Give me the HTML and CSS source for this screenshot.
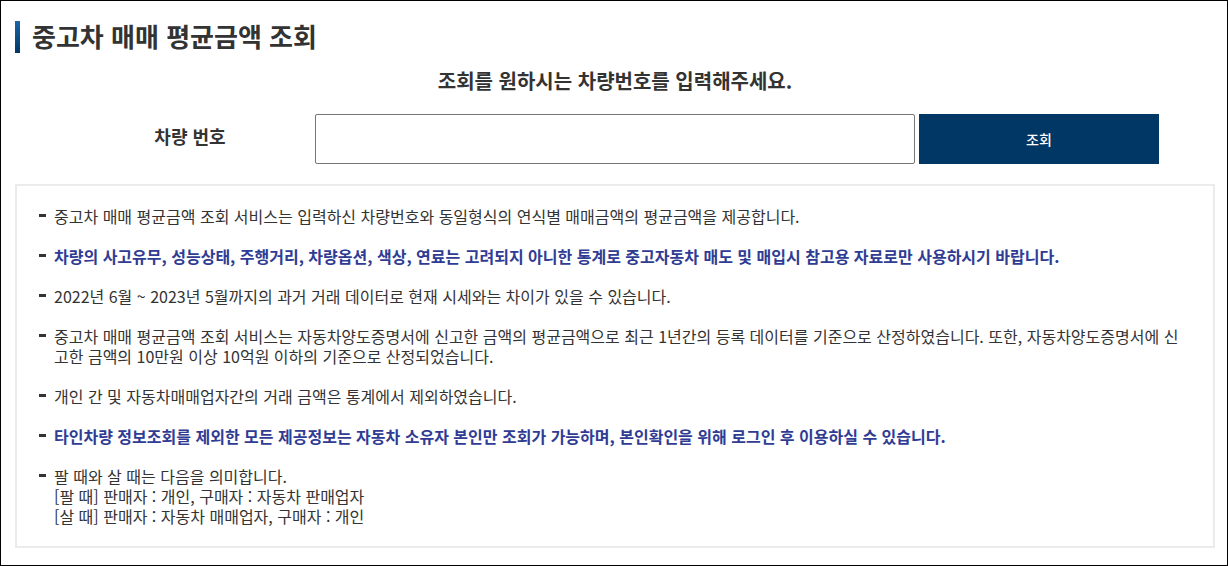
FILE: index.html
```html
<!DOCTYPE html>
<html lang="ko">
<head>
<meta charset="utf-8">
<title>중고차 매매 평균금액 조회</title>
<link rel="stylesheet" href="styles.css">
</head>
<body>
<main class="page">
  <h1 class="title">중고차 매매 평균금액 조회</h1>
  <p class="guide">조회를 원하시는 차량번호를 입력해주세요.</p>
  <form class="search">
    <label class="search-label" for="car-no">차량 번호</label>
    <div class="search-field"><input class="search-input" id="car-no" type="text"></div>
    <button class="search-button" type="button">조회</button>
  </form>
  <ul class="notes">
    <li>중고차 매매 평균금액 조회 서비스는 입력하신 차량번호와 동일형식의 연식별 매매금액의 평균금액을 제공합니다.</li>
    <li class="strong">차량의 사고유무, 성능상태, 주행거리, 차량옵션, 색상, 연료는 고려되지 아니한 통계로 중고자동차 매도 및 매입시 참고용 자료로만 사용하시기 바랍니다.</li>
    <li>2022년 6월 ~ 2023년 5월까지의 과거 거래 데이터로 현재 시세와는 차이가 있을 수 있습니다.</li>
    <li>중고차 매매 평균금액 조회 서비스는 자동차양도증명서에 신고한 금액의 평균금액으로 최근 1년간의 등록 데이터를 기준으로 산정하였습니다. 또한, 자동차양도증명서에 신고한 금액의 10만원 이상 10억원 이하의 기준으로 산정되었습니다.</li>
    <li>개인 간 및 자동차매매업자간의 거래 금액은 통계에서 제외하였습니다.</li>
    <li class="strong">타인차량 정보조회를 제외한 모든 제공정보는 자동차 소유자 본인만 조회가 가능하며, 본인확인을 위해 로그인 후 이용하실 수 있습니다.</li>
    <li>팔 때와 살 때는 다음을 의미합니다.<br>[팔 때] 판매자 : 개인, 구매자 : 자동차 판매업자<br>[살 때] 판매자 : 자동차 매매업자, 구매자 : 개인</li>
  </ul>
</main>
</body>
</html>
```

FILE: styles.css
```css
* { box-sizing: border-box; }
body {
  margin: 0;
  background: #fff;
  color: #333;
  font-family: "Noto Sans CJK KR", sans-serif;
  font-size: 16px;
  line-height: 20px;
}
.page {
  min-height: 100vh;
  border: 1px solid #000;
  padding: 20px 12px 17px 14px;
}
.title {
  display: flex;
  align-items: flex-start;
  gap: 12px;
  margin: 0;
  font-size: 26px;
  font-weight: 700;
  line-height: 30px;
}
.title::before {
  content: "";
  width: 5px;
  height: 32px;
  background: linear-gradient(#1c66a8, #003764);
}
.guide {
  margin: 13px 0 18px;
  font-size: 20px;
  font-weight: 700;
  line-height: 30px;
  text-align: center;
}
.search {
  display: grid;
  grid-template-columns: 125fr 302fr 120fr;
  padding: 0 56px 0 50px;
}
.search-label {
  font-size: 18px;
  font-weight: 700;
  line-height: 44px;
  text-align: center;
}
.search-field {
  padding-right: 4px;
}
.search-input {
  display: block;
  width: 100%;
  height: 50px;
  border: 1px solid #767676;
  border-radius: 2px;
  font: inherit;
}
.search-button {
  height: 50px;
  border: 0;
  background: #003764;
  color: #fff;
  font: 500 14px "Noto Sans CJK KR", sans-serif;
}
.notes {
  display: grid;
  gap: 20px;
  margin: 20px 0 0;
  padding: 20px 30px 20px 22px;
  border: 2px solid #ebebeb;
  list-style: none;
}
.notes li {
  position: relative;
  padding-left: 15px;
  word-break: break-all;
}
.notes li::before {
  content: "";
  position: absolute;
  left: 0;
  top: 8px;
  width: 7px;
  height: 3px;
  background: #333;
}
.notes .strong {
  color: #303c94;
  font-weight: 700;
}
```
